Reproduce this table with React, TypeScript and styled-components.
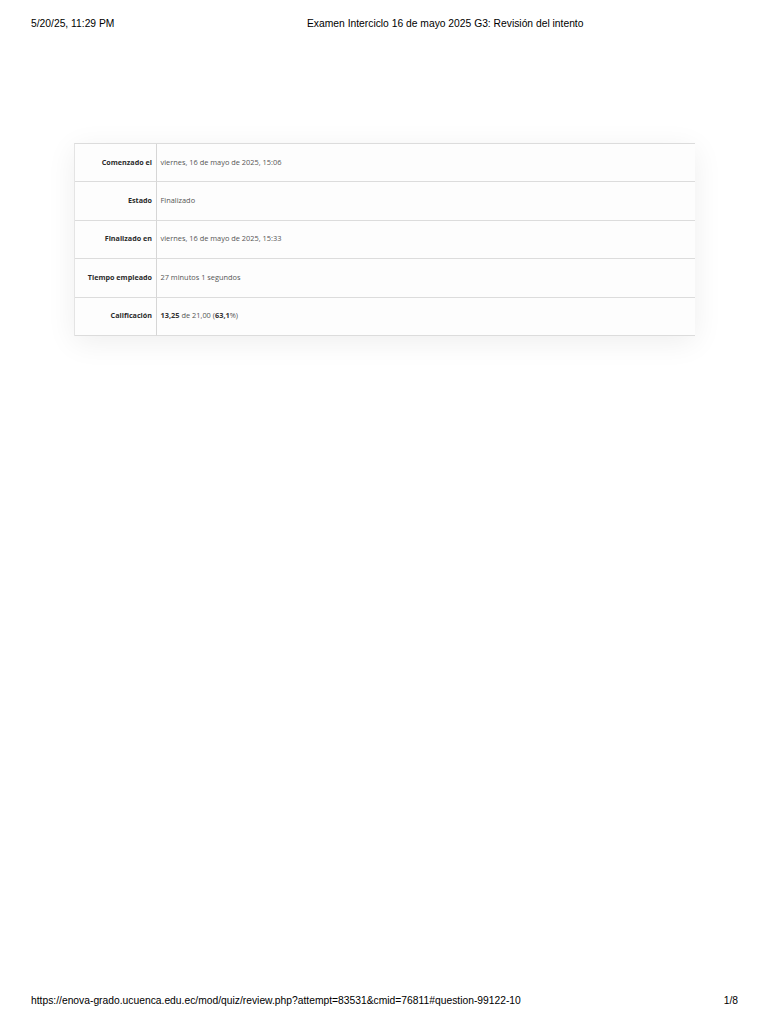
import React from "react";
import styled, { createGlobalStyle } from "styled-components";

const Global = createGlobalStyle`
  html, body { margin: 0; padding: 0; background: #ffffff; }
  #root { width: 768px; height: 1024px; }
`;

const Page = styled.div`
  width: 768px;
  height: 1024px;
  display: flex;
  flex-direction: column;
  font-family: "Liberation Sans", Arial, sans-serif;
  color: #000;
`;

const PrintBar = styled.div<{ $top: number }>`
  display: flex;
  align-items: center;
  height: 11px;
  padding: 0 30px 0 31px;
  font-size: 10.3px;
  line-height: 11px;
  margin-top: ${(p) => p.$top}px;
`;

const BarLeft = styled.div<{ $w?: number }>`
  width: ${(p) => (p.$w ? `${p.$w}px` : "auto")};
  flex: ${(p) => (p.$w ? "none" : "1")};
  white-space: nowrap;
`;

const BarRight = styled.div`
  white-space: nowrap;
`;

const Content = styled.div`
  flex: 1;
  padding: 114px 73px 0 74px;
`;

const Table = styled.div`
  display: grid;
  grid-template-columns: 82px 1fr;
  background: #fdfdfd;
  border-top: 1px solid #dcdcdc;
  border-left: 1px solid #e4e4e4;
  box-shadow: 0 6px 28px rgba(0, 0, 0, 0.07);
  font-family: "Open Sans", "Noto Sans", sans-serif;
  font-size: 7.2px;
  color: #333;
`;

const Label = styled.div`
  height: 37.4px;
  box-sizing: border-box;
  padding-bottom: 2px;
  display: flex;
  align-items: center;
  justify-content: flex-end;
  padding-right: 4px;
  font-weight: 700;
  color: #2a2a2a;
  border-bottom: 1px solid #dcdcdc;
  border-right: 1px solid #d6d6d6;
  height: 38.4px;
`;

const Value = styled.div`
  box-sizing: border-box;
  height: 38.4px;
  padding-bottom: 2px;
  display: flex;
  align-items: center;
  padding-left: 3.5px;
  font-size: 7.4px;
  color: #555;
  border-bottom: 1px solid #dcdcdc;
  b { font-weight: 700; color: #333; }
`;

const rows: [string, React.ReactNode][] = [
  ["Comenzado el", "viernes, 16 de mayo de 2025, 15:06"],
  ["Estado", "Finalizado"],
  ["Finalizado en", "viernes, 16 de mayo de 2025, 15:33"],
  ["Tiempo empleado", "27 minutos 1 segundos"],
  [
    "Calificación",
    <>
      <b>13,25</b>&nbsp;de 21,00 (<b>63,1</b>%)
    </>,
  ],
];

export default function App() {
  return (
    <>
      <Global />
      <Page>
        <PrintBar $top={18}>
          <BarLeft $w={276}>5/20/25, 11:29 PM</BarLeft>
          <BarLeft>Examen Interciclo 16 de mayo 2025 G3: Revisión del intento</BarLeft>
        </PrintBar>
        <Content>
          <Table>
            {rows.map(([k, v]) => (
              <React.Fragment key={k}>
                <Label>{k}</Label>
                <Value>{v}</Value>
              </React.Fragment>
            ))}
          </Table>
        </Content>
        <PrintBar $top={0}>
          <BarLeft>https://enova-grado.ucuenca.edu.ec/mod/quiz/review.php?attempt=83531&amp;cmid=76811#question-99122-10</BarLeft>
          <BarRight>1/8</BarRight>
        </PrintBar>
        <div style={{ height: 18 }} />
      </Page>
    </>
  );
}
